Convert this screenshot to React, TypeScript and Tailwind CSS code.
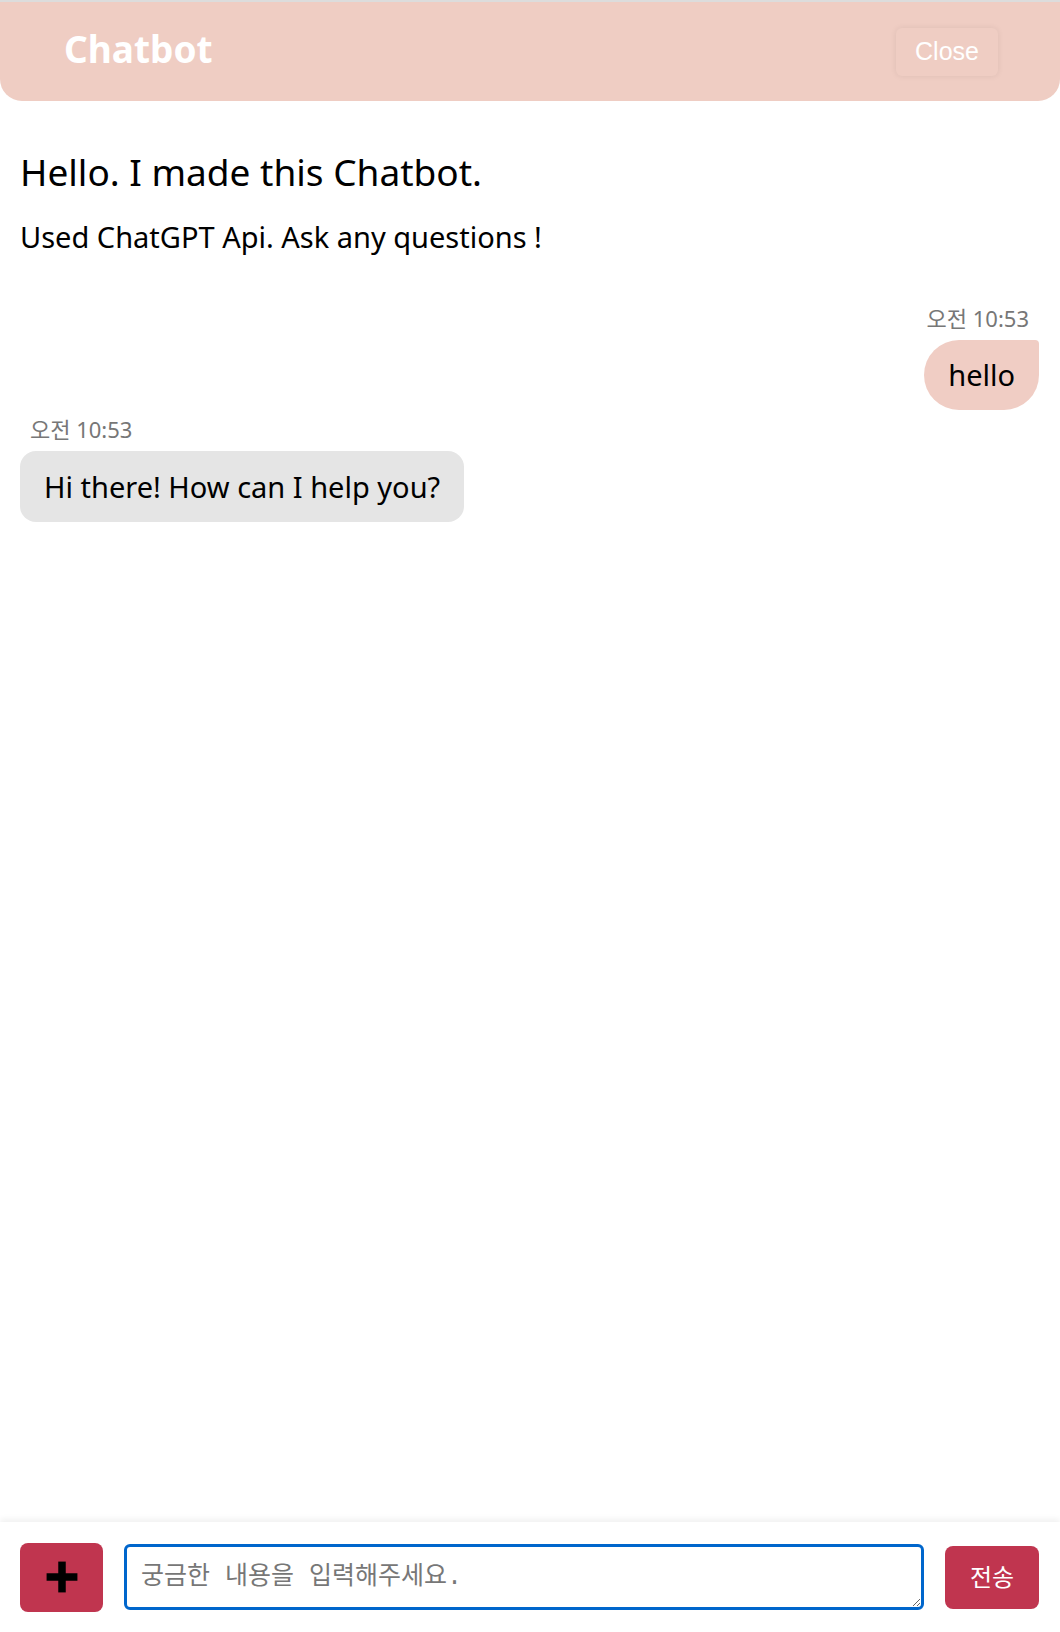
import { Plus } from "lucide-react";

interface Message {
  id: number;
  from: "user" | "bot";
  time: string;
  text: string;
}

const messages: Message[] = [
  { id: 1, from: "user", time: "오전 10:53", text: "hello" },
  { id: 2, from: "bot", time: "오전 10:53", text: "Hi there! How can I help you?" },
];

const sans = "font-['Noto_Sans','Noto_Sans_CJK_KR',sans-serif]";

export default function App() {
  return (
    <div className={`flex h-[1632px] flex-col bg-white ${sans}`}>
      <header className="flex h-[101px] shrink-0 items-center justify-between rounded-b-[22px] border-t-2 border-[#dcdcdc] bg-[#efcdc3] pl-[64px] pr-[62px]">
        <h1 className="mb-[6px] text-[37px] font-bold leading-none text-white">Chatbot</h1>
        <button className="h-[48px] w-[102px] rounded-md bg-[#efcdc3] font-['Liberation_Sans',sans-serif] text-[25px] text-white shadow-[0_0_6px_rgba(0,0,0,0.08)]">
          Close
        </button>
      </header>

      <main className="flex-1 px-[20px] pr-[21px]">
        <div className="pt-[47px]">
          <h2 className="text-[37px] leading-[48px] text-black">Hello. I made this Chatbot.</h2>
          <p className="mt-[22px] text-[29px] leading-[38px] text-black">Used ChatGPT Api. Ask any questions !</p>
        </div>

        <div className="mt-[48px] flex flex-col">
          {messages.map(m =>
            m.from === "user" ? (
              <div key={m.id} className="flex flex-col items-end">
                <span className="pr-[10px] text-[22px] leading-[28px] text-[#777]">{m.time}</span>
                <div className="mt-[8px] rounded-[36px] rounded-tr-[4px] bg-[#f0cdc4] px-[24px] py-[15px] text-[29px] leading-[40px] text-black">
                  {m.text}
                </div>
              </div>
            ) : (
              <div key={m.id} className="mt-[5px] flex flex-col items-start">
                <span className="pl-[10px] text-[22px] leading-[28px] text-[#777]">{m.time}</span>
                <div className="mt-[8px] rounded-[16px] bg-[#e5e5e5] px-[24px] py-[15px] text-[29px] leading-[41px] text-black">
                  {m.text}
                </div>
              </div>
            )
          )}
        </div>
      </main>

      <footer className="flex h-[110px] shrink-0 items-center gap-[21px] bg-white px-[20px] pr-[21px] shadow-[0_-3px_6px_rgba(0,0,0,0.06)]">
        <button className="flex h-[69px] w-[83px] shrink-0 items-center justify-center rounded-[8px] bg-[#c0354f]">
          <Plus size={40} strokeWidth={4.5} strokeLinecap="square" color="#000" />
        </button>
        <textarea
          placeholder="궁금한 내용을 입력해주세요."
          className="h-[66px] flex-1 rounded-[6px] border-[3px] border-[#0066cc] px-[14px] pt-[15px] pb-[10px] font-['Liberation_Mono','Noto_Sans_CJK_KR',monospace] text-[25px] leading-[32px] text-black outline-none placeholder:text-[#777]"
        />
        <button className="h-[63px] w-[94px] shrink-0 rounded-[8px] bg-[#c0354f] text-[24px] text-white">
          전송
        </button>
      </footer>
    </div>
  );
}
